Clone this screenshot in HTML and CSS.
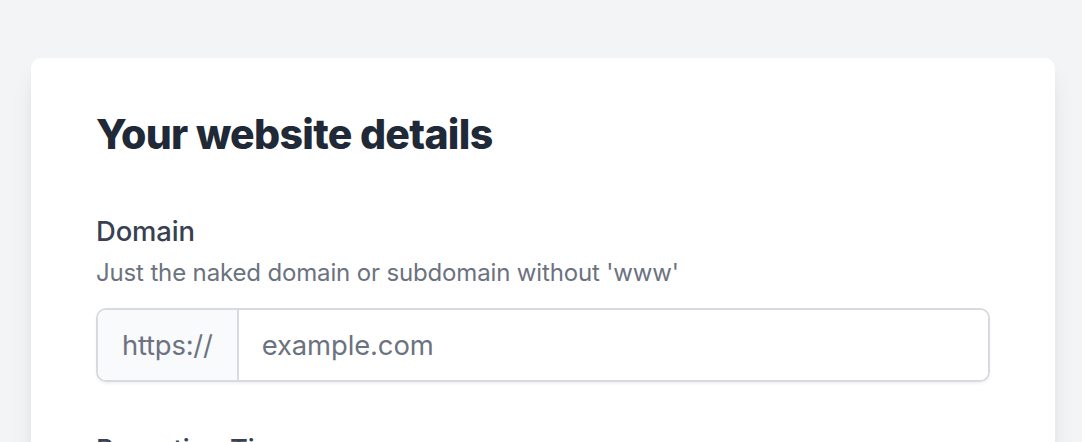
FILE: index.html
```html
<!DOCTYPE html>
<html lang="en">
<head>
<meta charset="utf-8">
<title>Your website details</title>
<link rel="stylesheet" href="styles.css">
</head>
<body>
<main class="page">
  <form class="card">
    <h1 class="title">Your website details</h1>
    <div class="field">
      <label class="label" for="domain">Domain</label>
      <p class="hint">Just the naked domain or subdomain without 'www'</p>
      <div class="input-group">
        <span class="prefix">https://</span>
        <input id="domain" class="input" type="text" placeholder="example.com">
      </div>
    </div>
    <div class="field field-next">
      <label class="label">Reporting Timezone</label>
    </div>
  </form>
</main>
</body>
</html>
```
FILE: styles.css
```css
html, body {
  margin: 0;
  padding: 0;
  background: #f3f4f6;
  font-family: Inter, "Noto Sans", sans-serif;
  overflow: hidden;
}
.page {
  padding: 58px 27px 0 31px;
}
.card {
  background: #ffffff;
  border-radius: 10px;
  box-shadow: 0 17px 26px -5px rgba(0,0,0,0.10), 0 7px 10px -3px rgba(0,0,0,0.05);
  padding: 49px 65px 60px 65px;
  min-height: 500px;
  box-sizing: border-box;
}
.title {
  margin: 0;
  font-size: 41px;
  line-height: 55px;
  font-weight: 800;
  color: #1f2937;
  letter-spacing: -0.7px;
}
.field {
  margin-top: 49px;
}
.label {
  display: block;
  font-size: 27.4px;
  line-height: 41px;
  font-weight: 500;
  color: #374151;
  letter-spacing: -0.1px;
}
.hint {
  margin: 4px 0 0 0;
  font-size: 24px;
  line-height: 34px;
  color: #6b7280;
  letter-spacing: -0.15px;
}
.input-group {
  margin-top: 18px;
  display: flex;
  height: 74px;
  box-sizing: border-box;
  border: 2px solid #d7dade;
  border-radius: 10px;
  overflow: hidden;
  box-shadow: 0 2px 3px rgba(0,0,0,0.05);
}
.prefix {
  display: flex;
  align-items: center;
  padding: 0 24px 0 24px;
  background: #f9fafb;
  border-right: 2px solid #d7dade;
  color: #6b7280;
  font-size: 27.4px;
  letter-spacing: -0.2px;
}
.input {
  flex: 1;
  border: none;
  outline: none;
  padding: 0 23px;
  font-family: inherit;
  font-size: 27.4px;
  color: #111827;
  background: #fff;
  letter-spacing: -0.1px;
}
.input::placeholder {
  color: #6b7280;
}
.field-next {
  margin-top: 47px;
}
```
